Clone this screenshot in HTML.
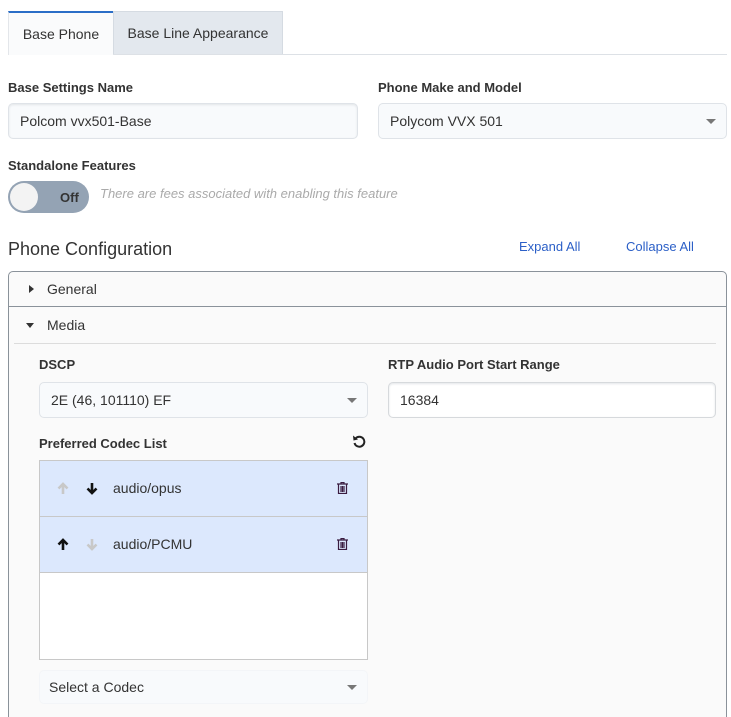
<!DOCTYPE html>
<html><head><style>
*{box-sizing:border-box;margin:0;padding:0}
html,body{width:731px;height:717px;overflow:hidden}
body{background:#fff;font-family:"Liberation Sans",sans-serif;color:#333;position:relative}
.abs{position:absolute}
.lbl{font-size:13px;font-weight:bold;color:#333}
.inp{border:1px solid #dfe3e8;border-radius:5px;background:#f8fafc;font-size:14px;padding-left:11px;display:flex;align-items:center}
.tri{position:absolute;right:10px;top:50%;margin-top:-2px;border-left:5px solid transparent;border-right:5px solid transparent;border-top:5px solid #777}
</style></head><body>
<div class="abs" style="left:8px;top:54px;width:719px;height:1px;background:#dde1e6"></div>
<div class="abs" style="left:8px;top:11px;width:105px;height:44px;background:#fafbfc;border-top:2px solid #2b6ec7;border-left:1px solid #e3e6ea;font-size:14px;display:flex;align-items:center;justify-content:center">Base Phone</div>
<div class="abs" style="left:113px;top:11px;width:170px;height:43px;background:#e3e8ee;border:1px solid #d5dbe2;border-bottom:none;font-size:14px;display:flex;align-items:center;justify-content:center">Base Line Appearance</div>

<div class="abs lbl" style="left:8px;top:80px">Base Settings Name</div>
<div class="abs inp" style="left:8px;top:103px;width:350px;height:36px;box-shadow:inset 0 1px 2px #e2e5e8">Polcom vvx501-Base</div>
<div class="abs lbl" style="left:378px;top:80px">Phone Make and Model</div>
<div class="abs inp" style="left:378px;top:103px;width:349px;height:36px">Polycom VVX 501<span class="tri"></span></div>

<div class="abs lbl" style="left:8px;top:158px">Standalone Features</div>
<div class="abs" style="left:8px;top:181px;width:81px;height:32px;border-radius:16px;background:#94a3b4"></div>
<div class="abs" style="left:10px;top:183px;width:28px;height:28px;border-radius:50%;background:#f3f3f3"></div>
<div class="abs" style="left:60px;top:190px;font-size:13px;font-weight:bold;color:#333">Off</div>
<div class="abs" style="left:100px;top:186px;font-size:13px;font-style:italic;color:#aaa">There are fees associated with enabling this feature</div>

<div class="abs" style="left:8px;top:239px;font-size:18px;color:#333">Phone Configuration</div>
<div class="abs" style="left:519px;top:239px;font-size:13px;color:#2b5fc7">Expand All</div>
<div class="abs" style="left:626px;top:239px;font-size:13px;color:#2b5fc7">Collapse All</div>

<div class="abs" style="left:8px;top:271px;width:719px;height:460px;border:1px solid #8a929a;border-radius:5px;background:#fafafa"></div>
<div class="abs" style="left:9px;top:306px;width:717px;height:1px;background:#8a929a"></div>
<div class="abs" style="left:29px;top:285px;border-top:4px solid transparent;border-bottom:4px solid transparent;border-left:5px solid #333"></div>
<div class="abs" style="left:47px;top:281px;font-size:14px">General</div>
<div class="abs" style="left:26px;top:323px;border-left:4px solid transparent;border-right:4px solid transparent;border-top:5px solid #333"></div>
<div class="abs" style="left:47px;top:317px;font-size:14px">Media</div>
<div class="abs" style="left:14px;top:343px;width:702px;height:1px;background:#dcdcdc"></div>

<div class="abs lbl" style="left:39px;top:357px">DSCP</div>
<div class="abs inp" style="left:39px;top:382px;width:329px;height:36px">2E (46, 101110) EF<span class="tri"></span></div>
<div class="abs lbl" style="left:388px;top:357px">RTP Audio Port Start Range</div>
<div class="abs inp" style="left:388px;top:382px;width:328px;height:36px;background:#fff;border-color:#d6d9dc;box-shadow:inset 0 1px 2px #e2e5e8">16384</div>

<div class="abs lbl" style="left:39px;top:436px">Preferred Codec List</div>
<svg class="abs" style="left:352px;top:434px" width="14" height="14" viewBox="0 0 14 14"><path d="M3.5 4.5A5 5 0 1 1 2.5 9" fill="none" stroke="#222" stroke-width="2"/><path d="M1 1.5L1.5 6.5L6 5.5Z" fill="#222"/></svg>

<div class="abs" style="left:39px;top:460px;width:329px;height:200px;border:1px solid #c8c8c8;background:#fff"></div>
<div class="abs" style="left:40px;top:461px;width:327px;height:56px;background:#dce8fd;border-bottom:1px solid #c8c8c8"></div>
<div class="abs" style="left:40px;top:517px;width:327px;height:56px;background:#dce8fd;border-bottom:1px solid #c8c8c8"></div>
<svg class="abs" style="left:57px;top:482px" width="12" height="13" viewBox="0 0 12 13"><path d="M6 12V3M1.5 6.5L6 2L10.5 6.5" fill="none" stroke="#c8c8c8" stroke-width="2.6"/></svg>
<svg class="abs" style="left:86px;top:482px" width="12" height="13" viewBox="0 0 12 13"><path d="M6 1V10M1.5 6.5L6 11L10.5 6.5" fill="none" stroke="#111" stroke-width="2.6"/></svg>
<svg class="abs" style="left:57px;top:538px" width="12" height="13" viewBox="0 0 12 13"><path d="M6 12V3M1.5 6.5L6 2L10.5 6.5" fill="none" stroke="#111" stroke-width="2.6"/></svg>
<svg class="abs" style="left:86px;top:538px" width="12" height="13" viewBox="0 0 12 13"><path d="M6 1V10M1.5 6.5L6 11L10.5 6.5" fill="none" stroke="#c8c8c8" stroke-width="2.6"/></svg>
<div class="abs" style="left:113px;top:480px;font-size:14px">audio/opus</div>
<div class="abs" style="left:113px;top:536px;font-size:14px">audio/PCMU</div>
<svg class="abs" style="left:337px;top:482px" width="11" height="12" viewBox="0 0 11 12"><path d="M0 2h11M4 2V0.5h3V2M1.5 2.5V11.5h8V2.5M4 4v6M5.5 4v6M7 4v6" fill="none" stroke="#3a1c40" stroke-width="1.2"/></svg>
<svg class="abs" style="left:337px;top:538px" width="11" height="12" viewBox="0 0 11 12"><path d="M0 2h11M4 2V0.5h3V2M1.5 2.5V11.5h8V2.5M4 4v6M5.5 4v6M7 4v6" fill="none" stroke="#3a1c40" stroke-width="1.2"/></svg>

<div class="abs inp" style="left:39px;top:670px;width:329px;height:34px;border-color:#f3f5f8;padding-left:9px">Select a Codec<span class="tri"></span></div>
</body></html>
